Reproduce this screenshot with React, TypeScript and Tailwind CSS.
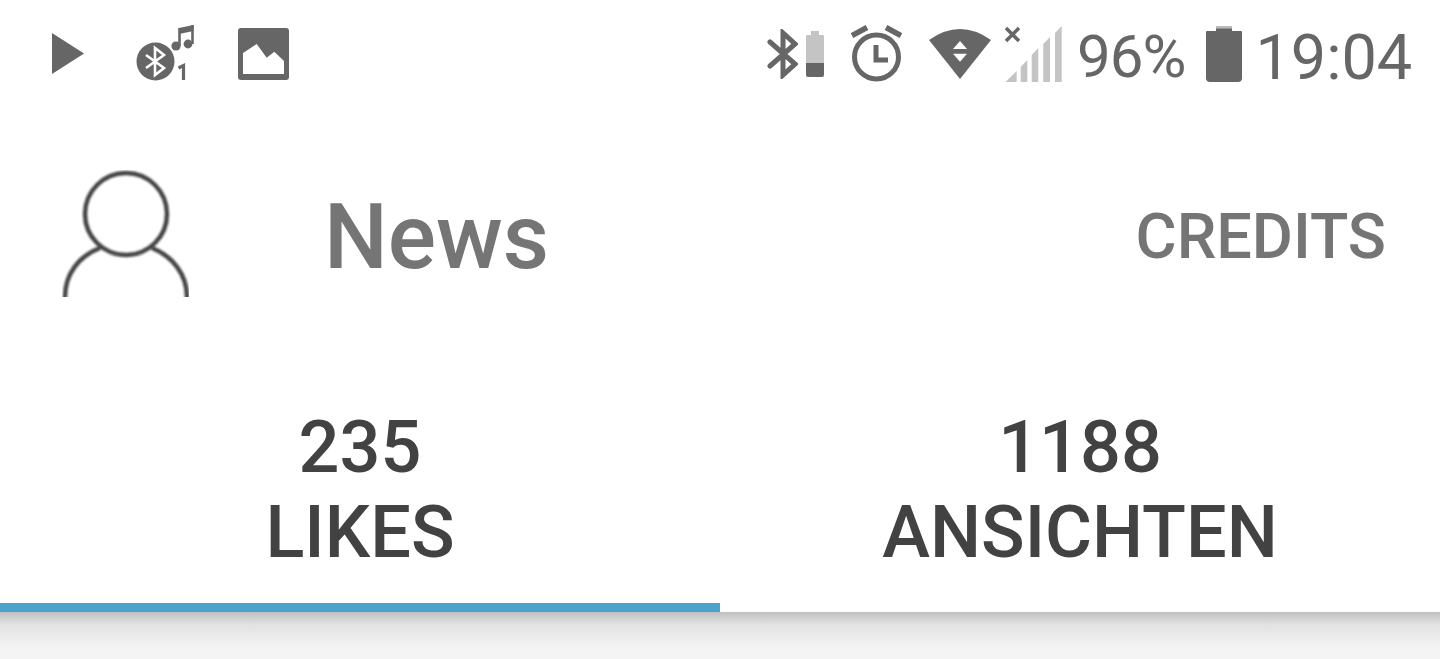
import React from "react";

const G = "#666666";
const L = "#c4c4c4";

function Play() {
  return <svg width="32" height="41" viewBox="0 0 32 41" className="ml-[52px]"><path d="M0 0 L32 20.5 L0 41 Z" fill={G} /></svg>;
}

function BtMusic() {
  return (
    <svg width="60" height="60" viewBox="0 0 60 60" className="ml-[51px]">
      <circle cx="20.5" cy="37.5" r="19" fill={G} />
      <path d="M11 31 L29 44 L20 51 L20 24 L29 31 L11 44" fill="none" stroke="#fff" strokeWidth="2.6" />
      <path d="M44 4 L58.5 1 L58.5 7 L44 10 Z" fill={G} />
      <path d="M44.5 4 L44.5 22 M57.5 1 L57.5 20" fill="none" stroke={G} strokeWidth="2.6" />
      <circle cx="41" cy="22" r="4.6" fill={G} />
      <circle cx="53" cy="20" r="4.4" fill={G} />
      <path d="M43.5 44 L48.5 41.5 L48.5 56" fill="none" stroke={G} strokeWidth="3.2" />
    </svg>
  );
}

function ImageIcon() {
  return (
    <svg width="51" height="52" viewBox="0 0 51 52" className="ml-[43px]">
      <rect width="51" height="52" rx="3" fill={G} />
      <path d="M5 46 V25 L18.7 16 L28.7 29.7 L36.3 23.7 L46 33 V46 Z" fill="#fff" />
    </svg>
  );
}

function Bt() {
  return (
    <svg width="31" height="50" viewBox="0 0 31 50">
      <path d="M3 13 L28 35 L16 46 V4 L28 15 L3 37" fill="none" stroke={G} strokeWidth="5" strokeLinecap="round" />
    </svg>
  );
}

function SmallBattery() {
  return (
    <svg width="18" height="46" viewBox="0 0 18 46" className="ml-[8px]">
      <path d="M5 0 H13 V4 H17 Q18 4 18 5 V46 H0 V5 Q0 4 1 4 H5 Z" fill={L} />
      <path d="M0 32 H18 V43 Q18 46 15 46 H3 Q0 46 0 43 Z" fill={G} />
    </svg>
  );
}

function Alarm() {
  return (
    <svg width="51" height="57" viewBox="0 0 51 57" className="ml-[27px]">
      <circle cx="25.5" cy="32" r="22" fill="none" stroke={G} strokeWidth="5" />
      <path d="M25 20 V35 H37" fill="none" stroke={G} strokeWidth="5" />
      <path d="M1 10.5 L16 2.5 M50 10.5 L35 2.5" fill="none" stroke={G} strokeWidth="5.5" />
    </svg>
  );
}

function Wifi() {
  return (
    <svg width="62" height="50" viewBox="0 0 62 50" className="ml-[27px]">
      <path d="M0 11 Q31 -11 62 11 L31 50 Z" fill={G} />
      <path d="M31 12 L38 20 L24 20 Z M24 24.7 L38 24.7 L31 32.7 Z" fill="#fff" />
    </svg>
  );
}

function Signal() {
  return (
    <svg width="57" height="56" viewBox="0 0 57 56" className="ml-[14px]">
      <path d="M1 2 L14 15 M14 2 L1 15" fill="none" stroke={G} strokeWidth="3.5" />
      <path d="M0.5 56 L11.7 45 V56 Z" fill={L} />
      <path d="M15.7 41 L22.3 34 V56 H15.7 Z" fill={L} />
      <path d="M26.7 29 L33.3 22 V56 H26.7 Z" fill={L} />
      <path d="M38.3 18 L45 11 V56 H38.3 Z" fill={L} />
      <path d="M50 7 L56.7 0 V56 H50 Z" fill={L} />
    </svg>
  );
}

function Battery() {
  return (
    <svg width="36" height="56" viewBox="0 0 36 56" className="ml-[21px]">
      <path d="M10 0 H26 V5 H35 Q36 5 36 6 V52 Q36 56 32 56 H4 Q0 56 0 52 V6 Q0 5 1 5 H10 Z" fill={G} />
      <rect x="10" y="0" width="16" height="2.5" fill="#bbbbbb" />
    </svg>
  );
}

function Avatar() {
  return (
    <svg width="127" height="127" viewBox="0 0 127 127" className="ml-[62px]">
      <g style={{ filter: "blur(0.8px)" }}>
        <circle cx="64" cy="44" r="41" fill="none" stroke="#444444" strokeWidth="4.5" />
        <path d="M3 140 V127 C3 104 17 86 38 78 M125 140 V127 C125 104 110 86 90 78" fill="none" stroke="#444444" strokeWidth="4.5" />
      </g>
    </svg>
  );
}

function Tab({ value, label, active }: { value: string; label: string; active?: boolean }) {
  return (
    <div className="relative flex h-[252px] flex-col items-center pt-[45px] text-[72px] font-medium leading-[85px] text-[#424242]">
      <div>{value}</div>
      <div>{label}</div>
      {active && <div className="absolute bottom-0 left-0 right-0 h-[9px] bg-[#4ba3cc]" />}
    </div>
  );
}

export default function App() {
  return (
    <div className="flex h-[659px] w-[1440px] flex-col overflow-hidden bg-[#f4f4f4] font-['Roboto',sans-serif]">
      <div className="bg-white">
        <div className="flex h-[107px] items-center">
          <Play />
          <BtMusic />
          <ImageIcon />
          <div className="ml-[478px] flex items-center">
            <Bt />
            <SmallBattery />
            <Alarm />
            <Wifi />
            <Signal />
            <span className="ml-[15px] mt-[7px] text-[60px] leading-none tracking-[-1px] text-[#666666]">96%</span>
            <Battery />
            <span className="ml-[13px] mt-[8px] text-[63px] leading-none text-[#666666]">19:04</span>
          </div>
        </div>
        <div className="flex h-[253px] items-center">
          <Avatar />
          <span className="ml-[135px] mt-[8px] text-[90px] font-medium leading-none text-[#757575]">News</span>
          <span className="ml-auto mr-[54px] mt-[5px] text-[63px] font-medium leading-none text-[#757575]">CREDITS</span>
        </div>
        <div className="grid grid-cols-2">
          <Tab value="235" label="LIKES" active />
          <Tab value="1188" label="ANSICHTEN" />
        </div>
      </div>
      <div className="h-[36px] bg-gradient-to-b from-[#c0c0c0] via-[#e2e2e2] via-35% to-[#f4f4f4]" />
    </div>
  );
}
